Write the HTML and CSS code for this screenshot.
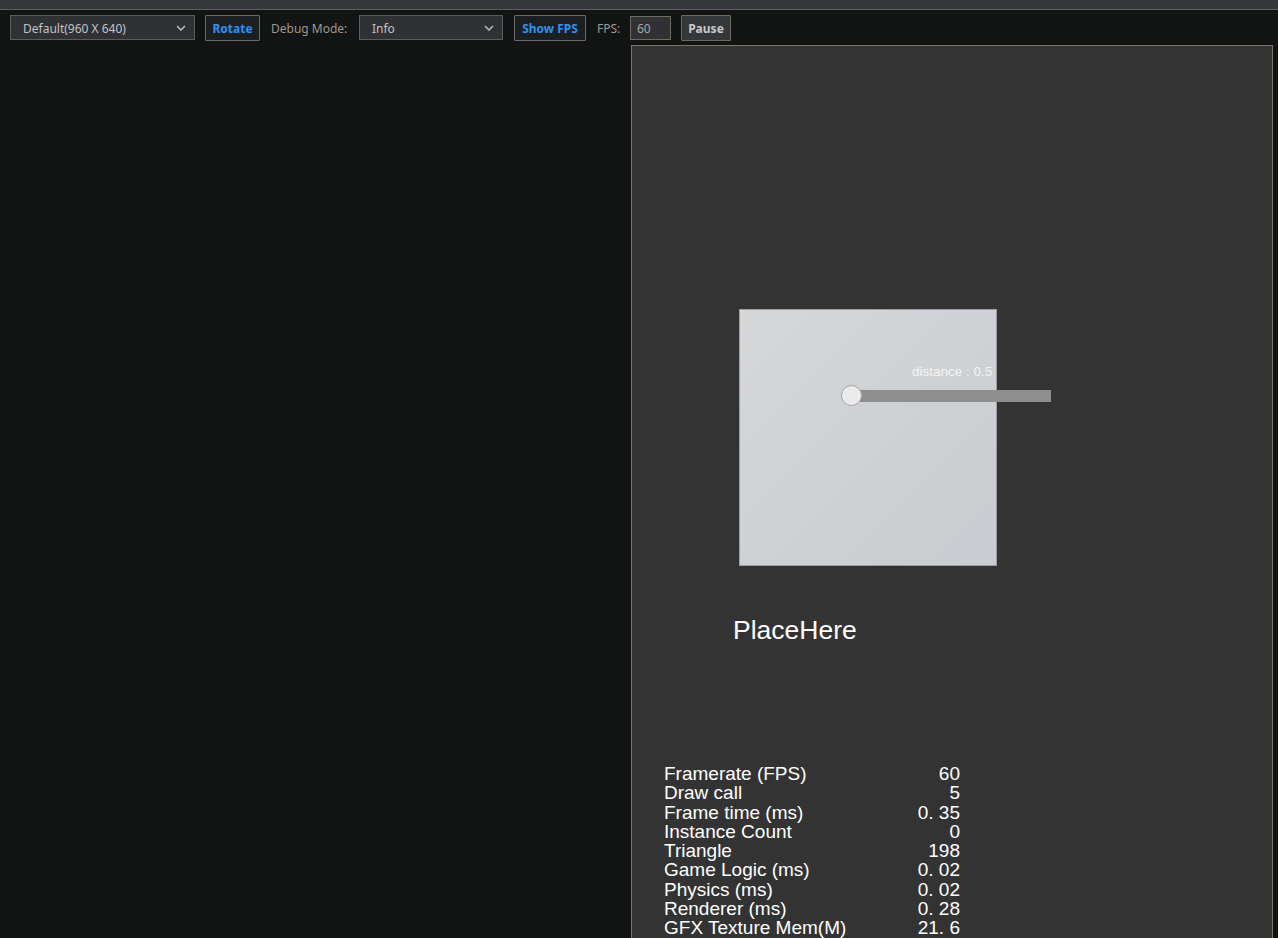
FILE: index.html
```html
<!DOCTYPE html>
<html>
<head>
<meta charset="utf-8">
<link rel="stylesheet" href="styles.css">
</head>
<body>
<div class="topstrip"></div>
<div class="toolbar">
  <div class="select sel-device"><span>Default(960 X 640)</span><svg class="chev" viewBox="0 0 10 6"><path d="M1 1 L5 5 L9 1" fill="none" stroke="#b8b8b8" stroke-width="1.6"/></svg></div>
  <div class="btn btn-blue btn-rotate">Rotate</div>
  <div class="label lbl-debug">Debug Mode:</div>
  <div class="select sel-debug"><span>Info</span><svg class="chev" viewBox="0 0 10 6"><path d="M1 1 L5 5 L9 1" fill="none" stroke="#b8b8b8" stroke-width="1.6"/></svg></div>
  <div class="btn btn-blue btn-fps">Show FPS</div>
  <div class="label lbl-fps">FPS:</div>
  <div class="input">60</div>
  <div class="btn btn-pause">Pause</div>
</div>
<div class="main">
  <div class="leftspace"></div>
  <div class="panel">
    <div class="square"></div>
    <div class="distance">distance : 0.5</div>
    <div class="track"></div>
    <div class="knob"></div>
    <div class="placehere">PlaceHere</div>
    <div class="stats">
      <div class="row"><span>Framerate (FPS)</span><span>60</span></div>
      <div class="row"><span>Draw call</span><span>5</span></div>
      <div class="row"><span>Frame time (ms)</span><span>0. 35</span></div>
      <div class="row"><span>Instance Count</span><span>0</span></div>
      <div class="row"><span>Triangle</span><span>198</span></div>
      <div class="row"><span>Game Logic (ms)</span><span>0. 02</span></div>
      <div class="row"><span>Physics (ms)</span><span>0. 02</span></div>
      <div class="row"><span>Renderer (ms)</span><span>0. 28</span></div>
      <div class="row"><span>GFX Texture Mem(M)</span><span>21. 6</span></div>
    </div>
  </div>
</div>
</body>
</html>
```
FILE: styles.css
```css
html, body {
  margin: 0;
  padding: 0;
  background: #121413;
  height: 938px;
  overflow: hidden;
  font-family: "Noto Sans", "Open Sans", sans-serif;
}
.topstrip {
  height: 9px;
  background: #36373b;
  border-bottom: 1px solid #5e5f63;
}
.toolbar {
  display: flex;
  align-items: center;
  height: 25px;
  margin-top: 5px;
  padding-left: 10px;
  font-size: 12px;
}
.select {
  box-sizing: border-box;
  height: 25px;
  background: #2f3134;
  border: 1px solid #5b5c5e;
  color: #c2c2c2;
  display: flex;
  align-items: center;
  justify-content: space-between;
  padding: 1px 8px 0 12px;
}
.chev { width: 10px; height: 6px; }
.sel-device { width: 185px; }
.sel-debug { width: 144px; }
.btn {
  box-sizing: border-box;
  height: 26px;
  padding-top: 1px;
  border: 1px solid #6e6a62;
  border-radius: 1px;
  display: flex;
  align-items: center;
  justify-content: center;
  font-weight: bold;
}
.btn-blue {
  background: #1c1f21;
  color: #2d91f2;
}
.btn-rotate { width: 55px; margin-left: 10px; }
.lbl-debug { margin-left: 11px; width: 88px; padding-top: 1px; }
.label { color: #9f988d; }
.btn-fps { width: 72px; margin-left: 11px; }
.lbl-fps { margin-left: 11px; width: 33px; padding-top: 1px; }
.input {
  box-sizing: border-box;
  width: 41px;
  height: 24px;
  background: #2f3134;
  border: 1px solid #6e6a62;
  color: #a7a7a7;
  padding-left: 6px;
  line-height: 23px;
}
.btn-pause {
  width: 50px;
  margin-left: 10px;
  background: #35383b;
  color: #c9c9c9;
}
.main {
  display: flex;
  margin-top: 5px;
}
.leftspace { width: 631px; flex: none; }
.panel {
  position: relative;
  flex: none;
  box-sizing: border-box;
  width: 642px;
  height: 900px;
  background: #333333;
  border: 1px solid #7a7469;
  font-family: "Liberation Sans", Arial, sans-serif;
  color: #ffffff;
}
.square {
  position: absolute;
  left: 107px;
  top: 263px;
  width: 256px;
  height: 255px;
  background: linear-gradient(135deg, #d5d7d9 0%, #c9ccd0 100%);
  border: 1px solid #9a9da1;
}
.distance {
  position: absolute;
  left: 280px;
  top: 318px;
  font-size: 13.5px;
  color: #f4f4f4;
}
.track {
  position: absolute;
  left: 219px;
  top: 344px;
  width: 200px;
  height: 12px;
  background: #8e8e8e;
}
.knob {
  position: absolute;
  left: 209px;
  top: 339px;
  width: 19px;
  height: 19px;
  border-radius: 50%;
  background: #ececec;
  border: 1px solid #a4a4a4;
}
.placehere {
  position: absolute;
  left: 101px;
  top: 569px;
  font-size: 26.5px;
}
.stats {
  position: absolute;
  left: 32px;
  top: 718px;
  width: 296px;
  font-size: 19px;
  line-height: 19.3px;
}
.row {
  display: flex;
  justify-content: space-between;
}
```
